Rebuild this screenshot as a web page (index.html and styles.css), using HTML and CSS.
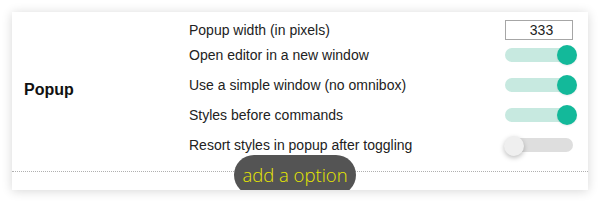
FILE: index.html
```html
<!DOCTYPE html>
<html>
<head>
<meta charset="utf-8">
<link rel="stylesheet" href="styles.css">
</head>
<body>
<div class="card">
  <div class="section">
    <div class="section-title">Popup</div>
    <div class="options">
      <div class="row row-first">
        <span class="label">Popup width (in pixels)</span>
        <input class="num" type="text" value="333">
      </div>
      <div class="row">
        <span class="label">Open editor in a new window</span>
        <span class="switch on"><span class="knob"></span></span>
      </div>
      <div class="row">
        <span class="label">Use a simple window (no omnibox)</span>
        <span class="switch on"><span class="knob"></span></span>
      </div>
      <div class="row">
        <span class="label">Styles before commands</span>
        <span class="switch on"><span class="knob"></span></span>
      </div>
      <div class="row">
        <span class="label">Resort styles in popup after toggling</span>
        <span class="switch off"><span class="knob"></span></span>
      </div>
    </div>
  </div>
  <div class="footer">
    <span class="add-btn">add a option</span>
  </div>
</div>
</body>
</html>
```
FILE: styles.css
```css
html, body {
  margin: 0;
  padding: 0;
  background: #ffffff;
}
body {
  padding: 12px;
  font-family: "Liberation Sans", Arial, sans-serif;
  color: #222;
}
.card {
  width: 576px;
  height: 178px;
  background: #fff;
  box-shadow: 0 1px 10px rgba(0, 0, 0, 0.16);
  overflow: hidden;
}
.section {
  display: flex;
  align-items: center;
  border-bottom: 1px dotted #b0b0b0;
  padding: 8px 15px 11px 0;
}
.section-title {
  width: 165px;
  padding-left: 12px;
  font-size: 16px;
  font-weight: bold;
  color: #111;
}
.options {
  flex: 1;
  display: flex;
  flex-direction: column;
}
.row {
  height: 30px;
  display: flex;
  align-items: center;
  justify-content: space-between;
  font-size: 14px;
}
.row-first {
  height: 20px;
}
.label {
  line-height: 16px;
}
.num {
  box-sizing: border-box;
  width: 68px;
  height: 20px;
  margin: 0;
  border: 1px solid #a6a6a6;
  padding: 0 0 0 5px;
  font-family: "Liberation Sans", Arial, sans-serif;
  font-size: 14px;
  color: #222;
  text-align: center;
  background: #fff;
}
.switch {
  position: relative;
  width: 68px;
  height: 14px;
  border-radius: 7px;
}
.switch.on {
  background: #c7e9e0;
}
.switch.off {
  background: #dedede;
}
.knob {
  position: absolute;
  top: -3px;
  width: 20px;
  height: 20px;
  border-radius: 50%;
}
.switch.on .knob {
  left: 52px;
  background: #13b99a;
  box-shadow: 0 1px 2px rgba(0, 0, 0, 0.08);
}
.switch.off .knob {
  left: -1px;
  top: -2px;
  background: #efefef;
  box-shadow: 0 2px 5px rgba(0, 0, 0, 0.25);
}
.footer {
  margin-top: -17px;
  padding-left: 222px;
}
.add-btn {
  display: inline-block;
  box-sizing: border-box;
  width: 122px;
  height: 40px;
  border-radius: 20px;
  background: #545454;
  color: #e8e800;
  font-family: "Open Sans", sans-serif;
  font-weight: 300;
  font-size: 18.5px;
  line-height: 40px;
  text-align: center;
}
```
